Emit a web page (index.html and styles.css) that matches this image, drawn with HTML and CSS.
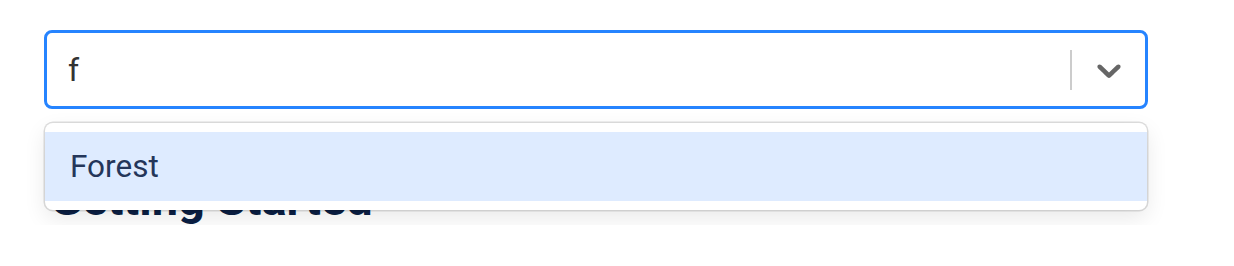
FILE: index.html
```html
<!DOCTYPE html>
<html lang="en">
<head>
<meta charset="utf-8">
<title>Select</title>
<link rel="stylesheet" href="styles.css">
</head>
<body>
<div class="page">
  <div class="select">
    <div class="control">
      <div class="value">f</div>
      <div class="indicators">
        <span class="separator"></span>
        <span class="dropdown">
          <svg viewBox="0 0 20 20" width="40" height="40" aria-hidden="true"><path d="M4.516 7.548c0.436-0.446 1.043-0.481 1.576 0l3.908 3.747 3.908-3.747c0.533-0.481 1.141-0.446 1.574 0 0.436 0.445 0.408 1.197 0 1.615-0.406 0.418-4.695 4.502-4.695 4.502-0.217 0.223-0.502 0.335-0.787 0.335s-0.57-0.112-0.789-0.335c0 0-4.287-4.084-4.695-4.502s-0.436-1.170 0-1.615z"/></svg>
        </span>
      </div>
    </div>
    <div class="menu">
      <div class="option focused">Forest</div>
    </div>
  </div>
  <h1 class="heading">Getting Started</h1>
</div>
</body>
</html>
```
FILE: styles.css
```css
html, body {
  margin: 0;
  padding: 0;
  background: #ffffff;
}
body {
  font-family: Roboto, "Liberation Sans", sans-serif;
  color: #172b4d;
  overflow: hidden;
}
.page {
  padding: 30px 0 0 44px;
}
.select {
  position: relative;
  width: 1104px;
}
.control {
  box-sizing: border-box;
  height: 79px;
  border: 3px solid #2684ff;
  border-radius: 8px;
  display: flex;
  align-items: center;
  background: #fff;
}
.value {
  flex: 1;
  padding-left: 21px;
  font-size: 32px;
  color: #333333;
  line-height: 40px;
}
.indicators {
  display: flex;
  align-items: center;
  align-self: stretch;
}
.separator {
  width: 2px;
  height: 40px;
  background: #cccccc;
}
.dropdown {
  width: 73px;
  display: flex;
  justify-content: center;
  align-items: center;
  color: #666666;
}
.dropdown svg {
  fill: currentColor;
  display: block;
}
.menu {
  position: absolute;
  top: 93px;
  left: 1px;
  right: 1px;
  box-sizing: border-box;
  padding: 9px 0;
  background: #fff;
  border-radius: 8px;
  box-shadow: 0 0 0 1.5px rgba(0,0,0,0.13), 0 8px 22px rgba(0,0,0,0.09);
  z-index: 2;
}
.option {
  height: 69px;
  box-sizing: border-box;
  padding: 0 25px;
  display: flex;
  align-items: center;
  font-size: 31.5px;
  color: #24365a;
}
.option.focused {
  background: #deebff;
}
.heading {
  position: relative;
  z-index: 0;
  margin: 64px 0 0 6px;
  font-size: 47px;
  line-height: 52px;
  font-weight: 700;
  color: #0b1f44;
}
```
